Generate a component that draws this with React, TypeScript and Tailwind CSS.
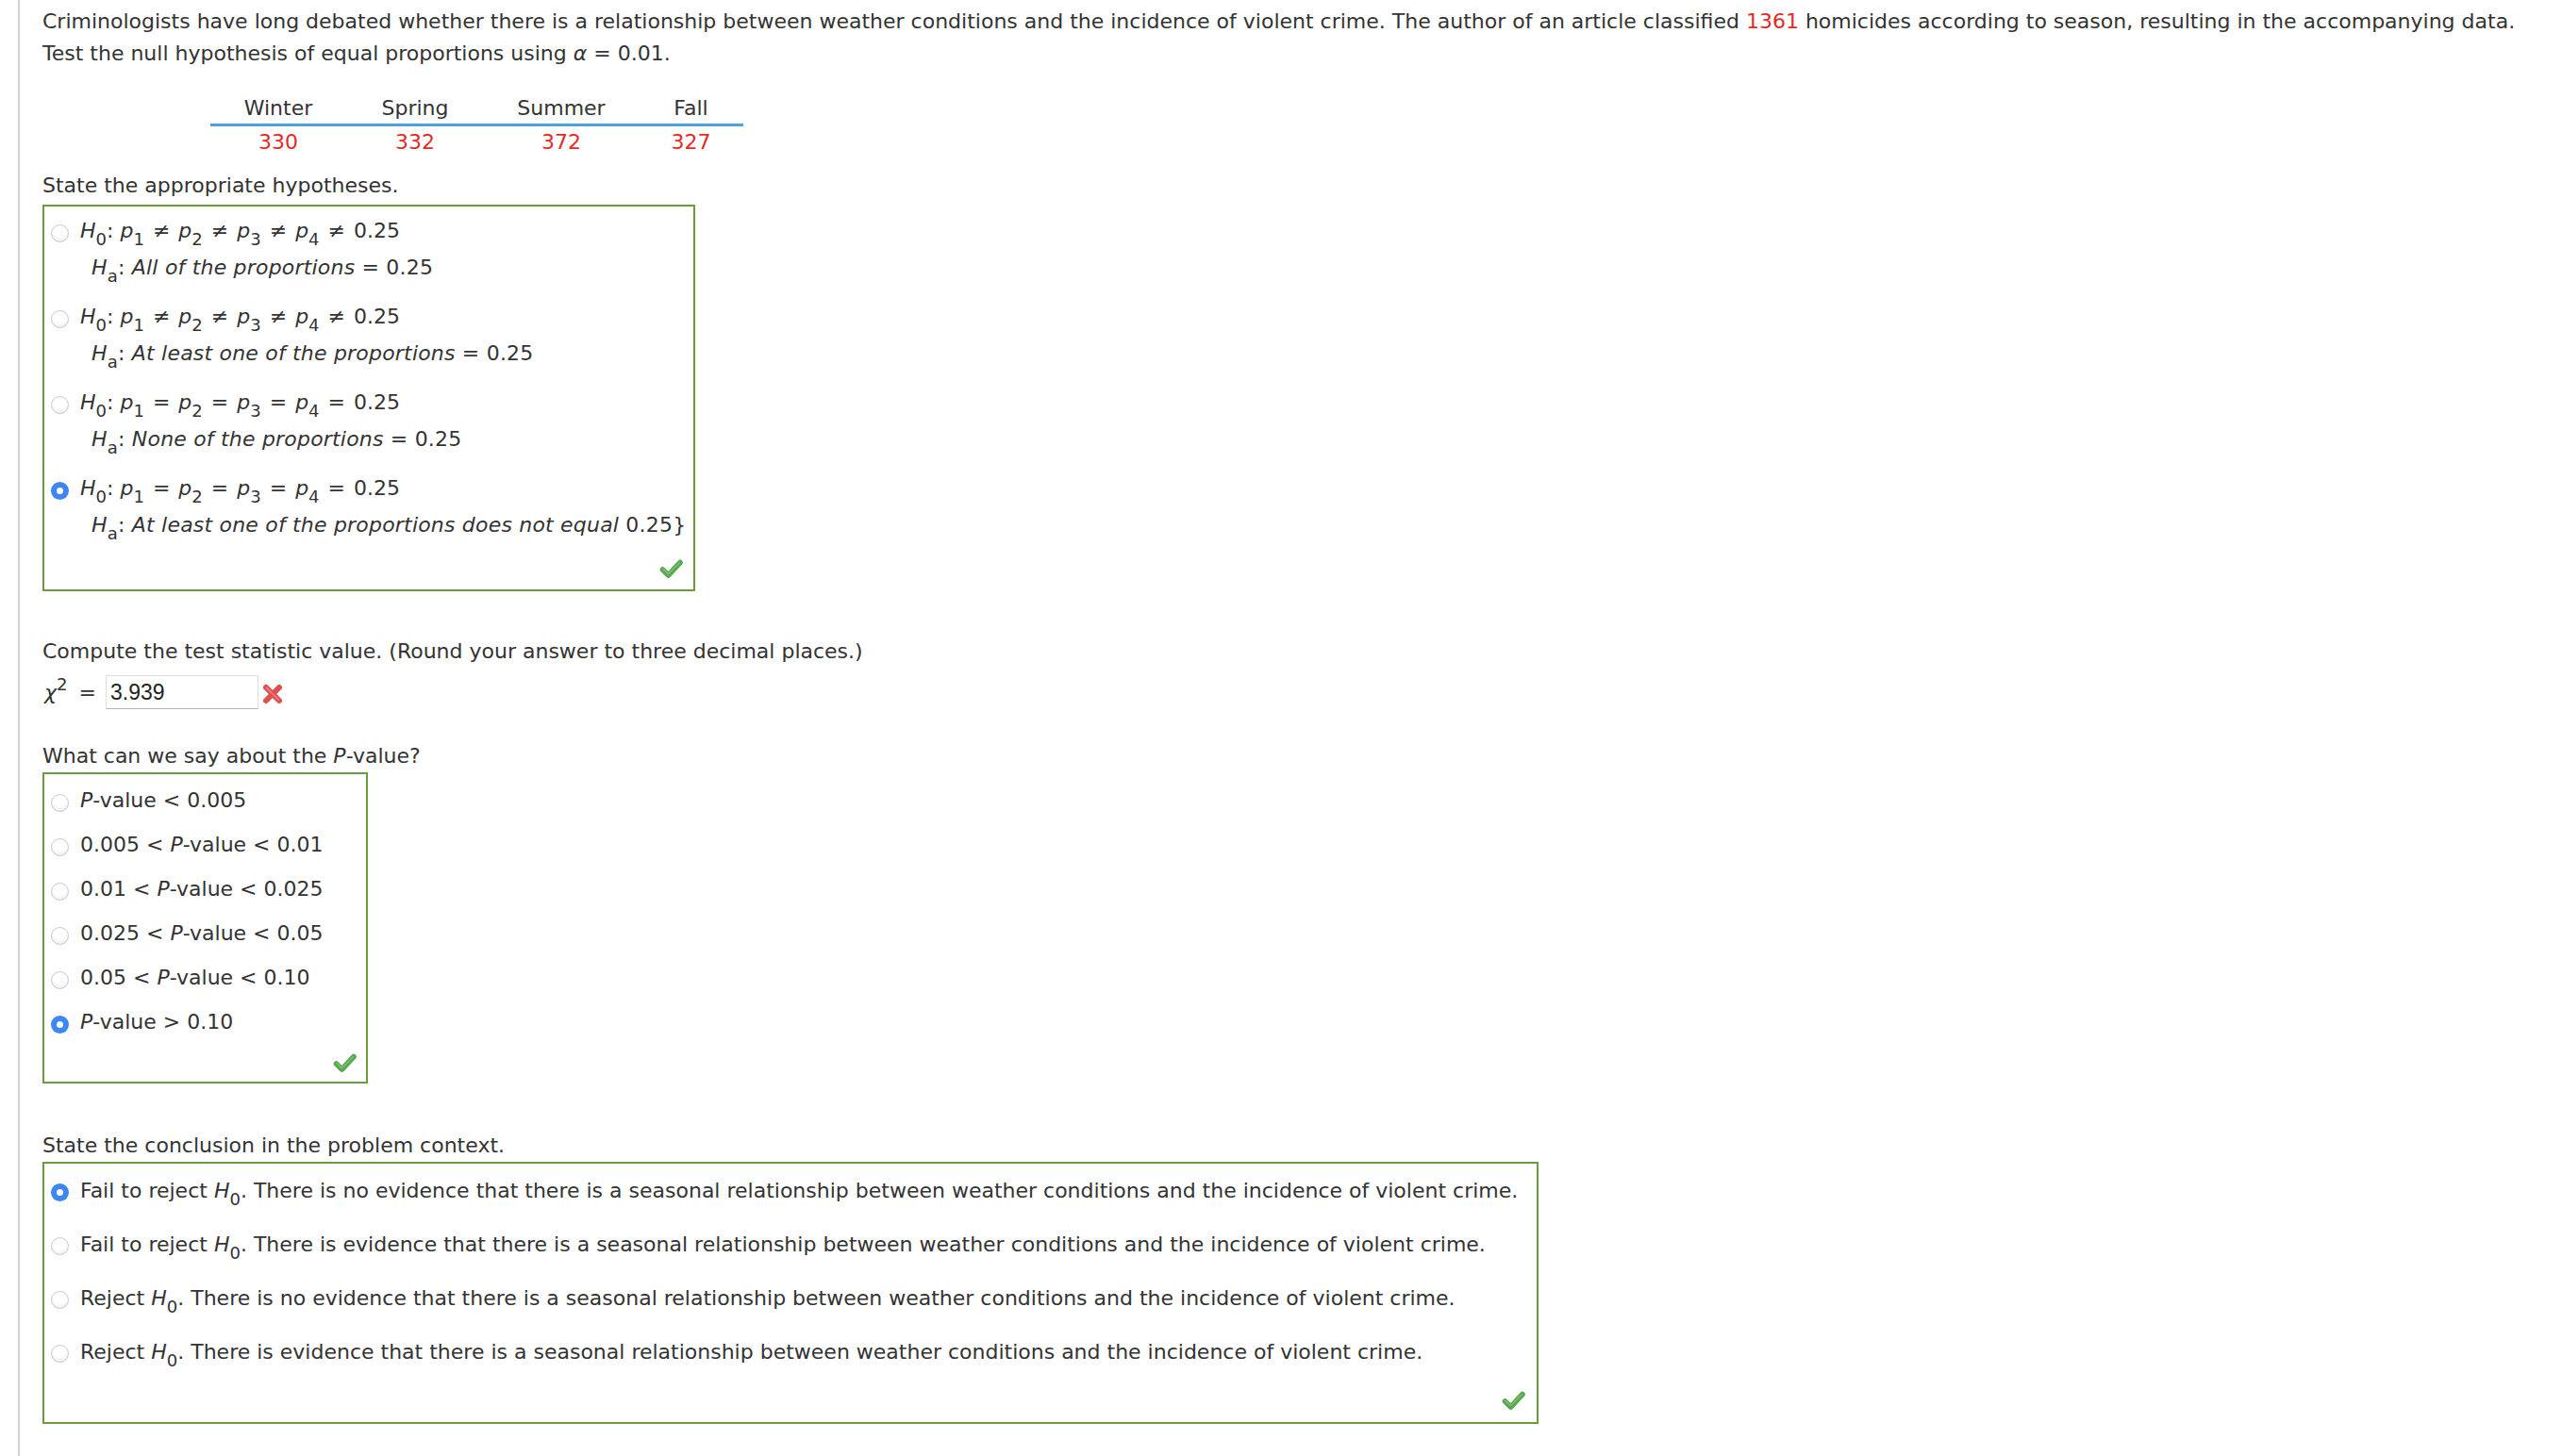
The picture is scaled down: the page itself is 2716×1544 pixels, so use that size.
import React from 'react';

// subscript / superscript pieces used by the math text
function Sub({ children }: { children: React.ReactNode }) {
  return <span className="relative top-[0.42em] text-[0.82em] not-italic leading-none">{children}</span>;
}

function Sup({ children }: { children: React.ReactNode }) {
  return <span className="relative top-[-0.55em] text-[0.82em] not-italic leading-none">{children}</span>;
}

function Radio({ checked }: { checked?: boolean }) {
  if (checked) {
    return (
      <span className="flex h-[19px] w-[19px] shrink-0 items-center justify-center rounded-full bg-[#3d86f4]">
        <span className="block h-[7px] w-[7px] rounded-full bg-white" />
      </span>
    );
  }
  return (
    <span className="block h-[19px] w-[19px] shrink-0 rounded-full border border-[#c9c9c9] bg-[radial-gradient(circle_at_50%_30%,#ffffff_45%,#e6e6e6_100%)]" />
  );
}

function Check() {
  return (
    <svg width="26" height="22" viewBox="0 0 26 22" className="block shrink-0">
      <polyline points="3.5,12 9.5,18 22,4.5" fill="none" stroke="#57a84e" strokeWidth="5.6" strokeLinecap="round" strokeLinejoin="round" />
      <polyline points="4.2,11.6 9.5,16.6 21.4,4.8" fill="none" stroke="#79c16d" strokeWidth="1.6" strokeLinecap="round" strokeLinejoin="round" />
    </svg>
  );
}

function Cross() {
  return (
    <svg width="24" height="24" viewBox="0 0 24 24" className="block shrink-0">
      <g stroke="#de5050" strokeWidth="6" strokeLinecap="round">
        <line x1="5" y1="5" x2="19" y2="19" />
        <line x1="19" y1="5" x2="5" y2="19" />
      </g>
      <g stroke="#f08585" strokeWidth="1.6" strokeLinecap="round">
        <line x1="5.6" y1="5.4" x2="18.4" y2="18.2" />
      </g>
    </svg>
  );
}

const Ne = () => <span className="mx-[9px]">≠</span>;
const Eq = () => <span className="mx-[9px]">=</span>;

function P({ n }: { n: number }) {
  return (
    <>
      <i>p</i>
      <Sub>{n}</Sub>
    </>
  );
}

function H0() {
  return (
    <>
      <i>H</i>
      <Sub>0</Sub>
    </>
  );
}

const hypotheses = [
  { eq: false, ha: <><i>All of the proportions</i> = 0.25</> },
  { eq: false, ha: <><i>At least one of the proportions</i> = 0.25</> },
  { eq: true, ha: <><i>None of the proportions</i> = 0.25</> },
  { eq: true, ha: <><i>At least one of the proportions does not equal</i> 0.25{'}'}</>, checked: true },
];

const pvalues: { label: React.ReactNode; checked?: boolean }[] = [
  { label: <><i>P</i>-value &lt; 0.005</> },
  { label: <>0.005 &lt; <i>P</i>-value &lt; 0.01</> },
  { label: <>0.01 &lt; <i>P</i>-value &lt; 0.025</> },
  { label: <>0.025 &lt; <i>P</i>-value &lt; 0.05</> },
  { label: <>0.05 &lt; <i>P</i>-value &lt; 0.10</> },
  { label: <><i>P</i>-value &gt; 0.10</>, checked: true },
];

const rest = 'seasonal relationship between weather conditions and the incidence of violent crime.';
const conclusions = [
  { verb: 'Fail to reject', text: `There is no evidence that there is a ${rest}`, checked: true },
  { verb: 'Fail to reject', text: `There is evidence that there is a ${rest}` },
  { verb: 'Reject', text: `There is no evidence that there is a ${rest}` },
  { verb: 'Reject', text: `There is evidence that there is a ${rest}` },
];

const seasons = [
  { name: 'Winter', count: 330 },
  { name: 'Spring', count: 332 },
  { name: 'Summer', count: 372 },
  { name: 'Fall', count: 327 },
];

export default function App() {
  return (
    <div className="min-h-screen bg-white pl-[19px] font-['DejaVu_Sans',sans-serif] text-[22px] text-[#333333]">
      <div className="min-h-screen border-l-2 border-[#d4d4d4] pl-[24px] pt-[6px]">
        <p className="whitespace-nowrap leading-[34px]">
          Criminologists have long debated whether there is a relationship between weather conditions and the incidence of violent crime. The author of an article classified{' '}
          <span className="text-[#e42b1f]">1361</span> homicides according to season, resulting in the accompanying data.
        </p>
        <p className="whitespace-nowrap leading-[34px]">
          Test the null hypothesis of equal proportions using <i>α</i> = 0.01.
        </p>

        {/* data table */}
        <div className="ml-[178px] mt-[24px] w-[565px]">
          <div className="grid grid-cols-[144px_146px_164px_111px] border-b-[3px] border-[#4aa3df]">
            {seasons.map(s => (
              <div key={s.name} className="h-[33px] text-center leading-[33px]">{s.name}</div>
            ))}
          </div>
          <div className="grid grid-cols-[144px_146px_164px_111px]">
            {seasons.map(s => (
              <div key={s.name} className="h-[34px] text-center leading-[34px] text-[#e42b1f]">{s.count}</div>
            ))}
          </div>
        </div>

        <p className="mt-[12px] leading-[34px]">State the appropriate hypotheses.</p>
        <div className="mt-[3px] w-[692px] border-2 border-[#6a9c3f] pt-[6px]">
          {hypotheses.map((h, i) => (
            <div key={i} className={`flex items-start pl-[7px] ${i < hypotheses.length - 1 ? 'mb-[13px]' : ''}`}>
              <span className="mt-[13px] block">
                <Radio checked={h.checked} />
              </span>
              <div className="ml-[12px] whitespace-nowrap">
                <div className="h-[39px] leading-[39px]">
                  <H0 />:{' '}
                  <P n={1} />
                  {h.eq ? <Eq /> : <Ne />}
                  <P n={2} />
                  {h.eq ? <Eq /> : <Ne />}
                  <P n={3} />
                  {h.eq ? <Eq /> : <Ne />}
                  <P n={4} />
                  {h.eq ? <Eq /> : <Ne />}
                  0.25
                </div>
                <div className="h-[39px] pl-[12px] leading-[39px] tracking-[0.2px]">
                  <i>H</i>
                  <Sub>a</Sub>: {h.ha}
                </div>
              </div>
            </div>
          ))}
          <div className="flex h-[49px] items-end justify-end pb-[11px] pr-[10px]">
            <Check />
          </div>
        </div>

        <p className="mt-[47px] leading-[34px]">Compute the test statistic value. (Round your answer to three decimal places.)</p>
        <div className="mt-[8px] flex h-[36px] items-center">
          <span className="pl-[2px]">
            <i>χ</i>
            <Sup>2</Sup>
          </span>
          <span className="ml-[12px]">=</span>
          <div className="ml-[10px] flex h-[36px] w-[162px] items-center border border-[#dedede] border-b-[#b3b3b3] pl-[4px] font-['Liberation_Sans',Arial,sans-serif] text-[23px] text-[#222222]">
            3.939
          </div>
          <span className="ml-[3px] mt-[4px] block">
            <Cross />
          </span>
        </div>

        <p className="mt-[33px] leading-[34px]">
          What can we say about the <i>P</i>-value?
        </p>
        <div className="w-[345px] border-2 border-[#6a9c3f] pt-[4px]">
          {pvalues.map((o, i) => (
            <div key={i} className="flex h-[47px] items-center pl-[7px]">
              <span className="mt-[5px] block">
                <Radio checked={o.checked} />
              </span>
              <span className="ml-[12px] whitespace-nowrap">{o.label}</span>
            </div>
          ))}
          <div className="flex h-[40px] items-center justify-end pr-[9px]">
            <Check />
          </div>
        </div>

        <p className="mt-[49px] leading-[34px]">State the conclusion in the problem context.</p>
        <div className="w-[1586px] border-2 border-[#6a9c3f]">
          {conclusions.map((c, i) => (
            <div key={i} className="flex h-[57px] items-center pl-[7px]">
              <span className="mt-[3px] block">
                <Radio checked={c.checked} />
              </span>
              <span className="ml-[12px] whitespace-nowrap">
                {c.verb} <H0 />. {c.text}
              </span>
            </div>
          ))}
          <div className="flex h-[46px] items-center justify-end pr-[11px]">
            <Check />
          </div>
        </div>
      </div>
    </div>
  );
}
